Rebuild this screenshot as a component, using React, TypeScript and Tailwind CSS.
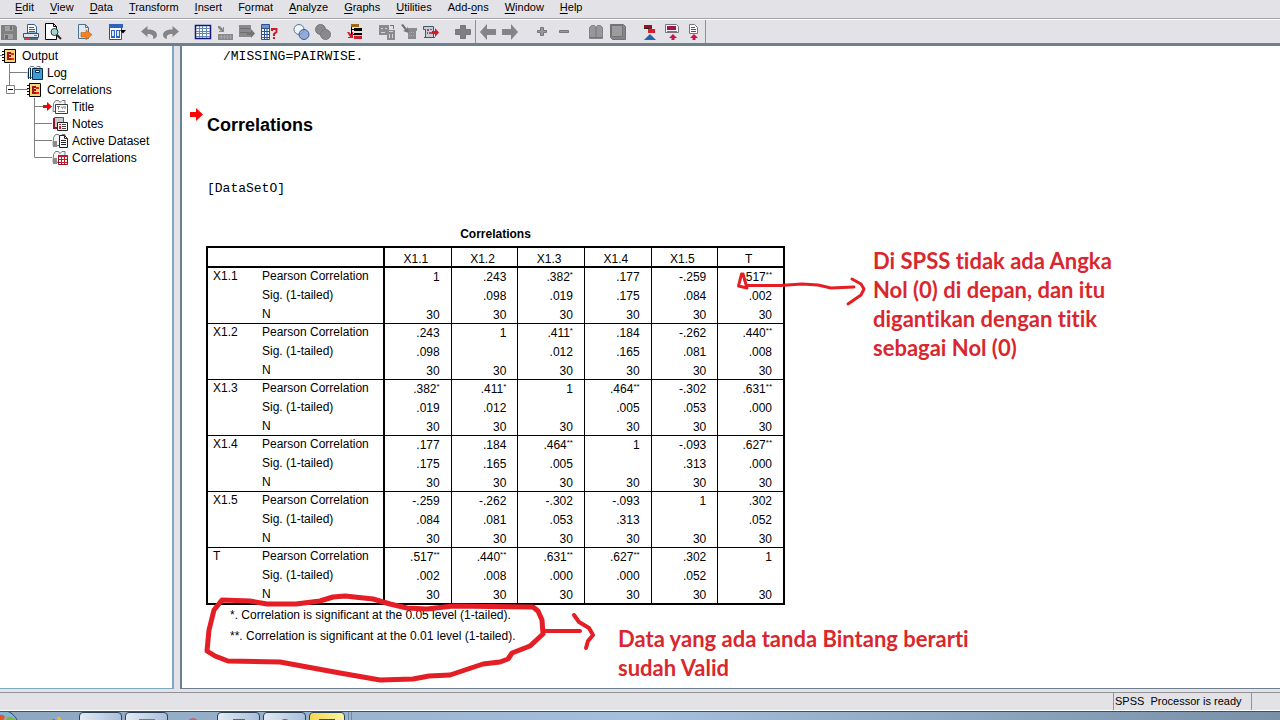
import type { ReactNode } from 'react';
import clsx from 'clsx';

const menus = [
  ['', 'E', 'dit'],
  ['', 'V', 'iew'],
  ['', 'D', 'ata'],
  ['', 'T', 'ransform'],
  ['', 'I', 'nsert'],
  ['F', 'o', 'rmat'],
  ['', 'A', 'nalyze'],
  ['', 'G', 'raphs'],
  ['', 'U', 'tilities'],
  ['Add-', 'o', 'ns'],
  ['', 'W', 'indow'],
  ['', 'H', 'elp'],
];

// Every toolbar drawing lives on an 18x18 grid.
const icons: Record<string, ReactNode> = {
  Save: (
    <>
      <path fill="#808080" d="M1 2h14l2 2v13H1z" />
      <path fill="#a2a2a4" d="M5 3h8v5H5zM4 11h9v5H4z" />
      <path fill="#6e6e70" d="M10 3h2v4h-2zM5 12h3v4H5z" />
    </>
  ),
  Print: (
    <>
      <path fill="#fff" stroke="#2b5f91" d="M5.500 1.500h7l2 2.500v6h-9z" />
      <path stroke="#2b5f91" d="M7 4.500h5M7 6.500h6M7 8.500h6" />
      <path fill="#dce5ec" stroke="#35526b" d="M1.500 10.500h15v4h-15z" />
      <path fill="#536b7c" d="M2 15h14v2H2z" />
      <path fill="#3cb44a" d="M12 12h3v1h-3z" />
      <path fill="#d44" d="M3 15h5v1H3z" />
    </>
  ),
  'Print Preview': (
    <>
      <path fill="#fff" stroke="#000" d="M1.500 .5h8l3 3v13h-11z" />
      <path fill="none" stroke="#000" d="M9.500 .5v3h3" />
      <circle cx="10.500" cy="9" r="3.500" fill="#9fd8cf" stroke="#334" />
      <path stroke="#222" strokeWidth="2" d="M13 12l4 4" />
    </>
  ),
  Export: (
    <>
      <path fill="#dfe9f2" stroke="#4d7292" d="M2.500 1.500h7l3 3v11h-10z" />
      <path fill="none" stroke="#4d7292" d="M9.500 1.500v3h3" />
      <path fill="#f58220" stroke="#c25a09" strokeWidth=".6" d="M5 9.500h5V6.800l6 5-6 5v-2.800H5z" />
    </>
  ),
  'Recall Dialog': (
    <>
      <path fill="#fff" stroke="#2c4f91" d="M1.500 4.500h12v12h-12z" />
      <path fill="#2c63bd" d="M1 1h14v4H1z" />
      <path fill="#2c63bd" d="M3 7h4v8H3zM8 7h4v8H8z" />
      <path fill="#dfe9f7" d="M4 8h2v5H4zM9 8h2v5H9z" />
      <path fill="#000" d="M12 7h6l-3 3.500z" />
    </>
  ),
  Undo: <path fill="#858587" d="M1 8.500L7.500 3v3.500c6 0 9.500 2 9.500 5.500 0 2-1.500 3.500-4 4 1-3-.5-5-5.500-5V14z" />,
  Redo: <path fill="#858587" d="M17 8.500L10.500 3v3.500C4.500 6.500 1 8.500 1 12c0 2 1.500 3.500 4 4-1-3 .5-5 5.500-5V14z" />,
  'Go to Data': (
    <>
      <path fill="#fff" stroke="#14147c" strokeWidth="1.500" d="M1.500 2.500h15v13h-15z" />
      <path fill="none" stroke="#5f88b5" d="M2 5.500h14M2 8.500h14M2 10.500h14M2 13.500h14M5.500 3v12M8.500 3v12M12.500 3v12" />
    </>
  ),
  'Go to Case': (
    <>
      <path fill="#8a8a8c" d="M2 3h2l3 3V4h1v5H3V8h2L2 5zM2 11h15v6H2z" />
      <path stroke="#a6a6a9" d="M3 14h13M5.500 12v4M8.500 12v4M11.500 12v4M14.500 12v4" />
    </>
  ),
  'Go to Variable': (
    <>
      <path fill="#8a8a8c" d="M1 2h12v12H1z" />
      <path stroke="#6e6e70" d="M2 5.500h10M2 9.500h10" />
      <path fill="#747476" d="M9 9h4V6l4 4.500-4 4.500v-3H9z" />
    </>
  ),
  Variables: (
    <>
      <path fill="#fff" stroke="#2c4f91" d="M1.500 1.500h8v15h-8z" />
      <path fill="#6d94c8" d="M2 2h7v3H2z" />
      <path fill="none" stroke="#2c4f91" d="M2 5.500h7M2 8.500h7M2 11.500h7M2 14.500h7M4.500 5v11M7 5v11" />
      <path fill="none" stroke="#d11a2b" strokeWidth="2" d="M12 8V6h4.500v3L14 11v2M14 14v2" />
    </>
  ),
  Find: (
    <>
      <circle cx="7" cy="6.500" r="5" fill="#f1f5f9" stroke="#5a7694" />
      <circle cx="12" cy="11.500" r="5" fill="#7f9fd3" fillOpacity=".8" stroke="#3b5d94" />
    </>
  ),
  'Find Next': (
    <>
      <circle cx="6.500" cy="6.500" r="5" fill="#8a8a8c" stroke="#77777a" />
      <circle cx="11.500" cy="11.500" r="5" fill="#8a8a8c" stroke="#77777a" />
    </>
  ),
  'Select Last Output': (
    <>
      <path fill="#9c6a10" d="M5 1h8v3H5z" />
      <path fill="#000" d="M8 5h8v3H8zM8 10h8v2H8zM5 4h1v8H5zM6 6h3v1H6zM6 11h3v1H6z" />
      <path fill="#d11a2b" d="M1 9h2l3 3V9h1v6H2v-1h2zM8 13h8v3H8z" />
      <path fill="#f5cf3b" d="M8 12h8v1H8z" />
    </>
  ),
  'Designate Window': (
    <>
      <path fill="#8b8b8d" d="M1 2h10v10H1zM9 7h8v10H9z" />
      <path fill="#d2d2d6" d="M3 5h2v1H3zM7 5h2v1H7zM3 9h4v1H3zM11 11h1v4h-1zM14 11h1v4h-1zM11 8h4v1h-4z" />
      <path fill="#747476" d="M12 2h4v4h-1V3h-3z" />
    </>
  ),
  'Run Script': (
    <>
      <path fill="#8b8b8d" d="M7 5h10v3h-1v8H8v-6z" />
      <path fill="#747476" d="M1 2l2-1 4 5V3l2 7-6-2 2-1z" />
      <path stroke="#a9a9ac" strokeDasharray="1 1" d="M9 9.500h6M9 12.500h6" />
    </>
  ),
  'Insert Output': (
    <>
      <path fill="#c9ced6" stroke="#46546b" d="M1.500 3.500h10v11h-8v-8h-2z" />
      <path fill="none" stroke="#46546b" d="M2 14.500h11" />
      <path fill="#b6406b" d="M5 6h2v2H5zM8 6h2v1H8zM5 9h1v2H5zM7 9h3v2H7z" />
      <path fill="#d11a2b" d="M10 8h3V5l4 4.500-4 4.500v-3h-3z" />
    </>
  ),
  Add: <path fill="#7f7f81" stroke="#77777a" d="M6.500 2.500h5v4h5v5h-5v4h-5v-4h-5v-5h5z" />,
  Previous: <path fill="#858587" d="M1 9l7-8v5h9v6H8v5z" />,
  Next: <path fill="#858587" d="M17 9l-7-8v5H1v6h9v5z" />,
  Expand: <path fill="#99999b" stroke="#77777a" d="M7.500 4.500h3v3h3v2h-3v3h-3v-3h-3v-2h3z" />,
  Collapse: <path fill="#99999b" stroke="#77777a" d="M4.500 7.500h9v2h-9z" />,
  Show: (
    <>
      <path fill="#97979a" stroke="#858588" d="M2.500 4.500l2-2h3l1.500 2 1.500-2h3l2 2v11h-13z" />
      <path stroke="#757578" d="M9 4v11M2 14.500h14" />
    </>
  ),
  Hide: (
    <>
      <path fill="#858587" stroke="#737375" d="M1.500 1.500h13l2 2v13h-13l-2-2z" />
      <path fill="#9c9c9f" stroke="#737375" d="M2.500 2.500h11v11h-11z" />
    </>
  ),
  'Promote Outline': (
    <>
      <path fill="#96121c" d="M3 2h8v4H3z" />
      <path fill="#d8202c" d="M7 6h7v4H7z" />
      <path fill="#222" d="M3 5h5v1H3z" />
      <path fill="#2464a8" d="M9 11l6 6H3z" />
    </>
  ),
  'Insert Heading': (
    <>
      <path fill="#f5f5f7" stroke="#77777a" d="M2.500 1.500h11l2 2v6h-13z" />
      <path fill="#a0144f" d="M4 3h9v4H4z" />
      <path stroke="#77777a" d="M4 8.500h10" />
      <path fill="#d1104a" d="M10 11l4 4h-2.500v2h-3v-2H6z" />
    </>
  ),
  'Insert Text': (
    <>
      <path fill="#fff" stroke="#77777a" d="M4.500 1.500h5l3 3v6h-8z" />
      <path stroke="#55555a" d="M6 4.500h4M6 6.500h5M6 8.500h5" />
      <path fill="#d1104a" d="M9 11l4 4h-2.500v2h-3v-2H5z" />
    </>
  ),
};

const toolbarLeft = [
  ['Save', 'Print', 'Print Preview'],
  ['Export'],
  ['Recall Dialog'],
  ['Undo', 'Redo'],
  ['Go to Data', 'Go to Case', 'Go to Variable', 'Variables'],
  ['Find', 'Find Next'],
  ['Select Last Output'],
  ['Designate Window', 'Run Script', 'Insert Output'],
  ['Add'],
];

const toolbarRight = [
  ['Previous', 'Next'],
  ['Expand', 'Collapse'],
  ['Show', 'Hide'],
  ['Promote Outline', 'Insert Heading', 'Insert Text'],
];

function ToolGroups({ groups }: { groups: string[][] }) {
  return (
    <div className="flex gap-[10px]">
      {groups.map((group) => (
        <div key={group[0]} className="flex">
          {group.map((name) => (
            <button key={name} type="button" aria-label={name} className="flex w-[22px] justify-center">
              <svg viewBox="0 0 18 18" className="size-[18px]">
                {icons[name]}
              </svg>
            </button>
          ))}
        </div>
      ))}
    </div>
  );
}

const book = <path fill="#f4f4f5" stroke="#77777a" d="M1.500 4.500l2-3h3l1.500 2 2-2h3v11h-12z" />;
const bookShade = <path fill="#8b8b8e" d="M1 8h4v6H1z" />;

const treeIcons: Record<string, ReactNode> = {
  output: (
    <>
      <path fill="#fbd47c" stroke="#000" d="M2.500 1.500h11v13h-11z" />
      <path stroke="#000" d="M0 3.500h3M0 6.500h3M0 9.500h3M0 12.500h3" />
      <path fill="#9b1717" d="M5 4h4v2H7v1h2v2H7v1h2v2H5z" />
      <path fill="#e22" d="M9 5h3v2H9zM9 10h3v2H9z" />
    </>
  ),
  log: (
    <>
      {book}
      <path fill="#3f9bd6" stroke="#0c2d4a" d="M5.500 3.500h10v11h-10z" />
      <path fill="#fff" stroke="#0c2d4a" d="M8.500 5.500h4v2h-4z" />
      <path stroke="#0c2d4a" d="M1.500 3v11M3.500 3v11" />
    </>
  ),
  title: (
    <>
      {book}
      <path fill="#fff" stroke="#3d3d40" d="M3.500 5.500h12v9h-12z" />
      <path fill="none" stroke="#777" d="M5 7.500h3M6.500 8v2.500M9.500 7.500l1 2 1-2M13 7v3M6 12.500h7" />
    </>
  ),
  notes: (
    <>
      <path fill="#c9c9cc" stroke="#55555a" d="M2.500 1.500h9v10h-9z" />
      <path fill="#8b1a26" d="M1 2h2v11H1zM2 11h4v2H2z" />
      <path fill="#fff" stroke="#222" d="M5.500 6.500h10v8h-10z" />
      <path fill="#d8202c" d="M7 8h2v1H7zM7 10h2v3H7z" />
      <path stroke="#444" d="M10 8.500h4M10 10.500h4M10 12.500h4" />
    </>
  ),
  dataset: (
    <>
      {book}
      {bookShade}
      <path fill="#fff" stroke="#222" d="M7.500 2.500h5l3 3v9h-8z" />
      <path fill="none" stroke="#222" d="M12.500 2.500v3h3M9 7.500h5M9 9.500h5M9 11.500h5" />
    </>
  ),
  table: (
    <>
      {book}
      {bookShade}
      <path fill="#fff" stroke="#8b101c" d="M6.500 5.500h9v9h-9z" />
      <path fill="#c9152a" d="M6 5h10v2H6z" />
      <path stroke="#c9152a" d="M7 9.500h8M7 12.500h8M9.500 6v8M12.500 6v8" />
    </>
  ),
};

const tree = [
  { label: 'Output', icon: 'output', level: 0 },
  { label: 'Log', icon: 'log', level: 1 },
  { label: 'Correlations', icon: 'output', level: 1 },
  { label: 'Title', icon: 'title', level: 2 },
  { label: 'Notes', icon: 'notes', level: 2 },
  { label: 'Active Dataset', icon: 'dataset', level: 2 },
  { label: 'Correlations', icon: 'table', level: 2 },
];

const treeIndent = ['pl-[2px]', 'pl-[27px]', 'pl-[52px]'];

function OutlineTree() {
  return (
    <aside className="w-[174px] shrink-0 overflow-hidden border-r-2 border-b border-[#7fa9c0] bg-white">
      <div className="relative pt-px">
        <ul>
          {tree.map((node, i) => (
            <li key={i} className={clsx('flex h-[17px] items-center gap-1', treeIndent[node.level])}>
              <svg viewBox="0 0 16 16" className="size-4 shrink-0">
                {treeIcons[node.icon]}
              </svg>
              <span className="text-xs whitespace-nowrap">{node.label}</span>
            </li>
          ))}
        </ul>
        <svg className="pointer-events-none absolute top-0 left-0 h-[120px] w-[52px]" fill="none" stroke="#808080">
          <path d="M0 9.500h3M9.500 18v22M9.500 26.500h18M15 43.500h13M34.500 52v59.500M34.500 60.500h10M34.500 77.500h18M34.500 94.500h18M34.500 111.500h18" />
          <path fill="#fff" d="M6.500 39.500h8v8h-8z" />
          <path stroke="#000" d="M8 43.500h5" />
          <path fill="#f00" stroke="none" d="M43 59h4v-3l5 4.500-5 4.500v-3h-4z" />
        </svg>
      </div>
    </aside>
  );
}

const variables = ['X1.1', 'X1.2', 'X1.3', 'X1.4', 'X1.5', 'T'];

const pearson = [
  ['1', '.243', '.382*', '.177', '-.259', '.517**'],
  ['.243', '1', '.411*', '.184', '-.262', '.440**'],
  ['.382*', '.411*', '1', '.464**', '-.302', '.631**'],
  ['.177', '.184', '.464**', '1', '-.093', '.627**'],
  ['-.259', '-.262', '-.302', '-.093', '1', '.302'],
  ['.517**', '.440**', '.631**', '.627**', '.302', '1'],
];

const significance = [
  ['', '.098', '.019', '.175', '.084', '.002'],
  ['.098', '', '.012', '.165', '.081', '.008'],
  ['.019', '.012', '', '.005', '.053', '.000'],
  ['.175', '.165', '.005', '', '.313', '.000'],
  ['.084', '.081', '.053', '.313', '', '.052'],
  ['.002', '.008', '.000', '.000', '.052', ''],
];

const counts = variables.map(() => '30');

function Value({ text }: { text: string }) {
  const digits = text.replace(/\*/g, '');
  const stars = text.slice(digits.length);
  return (
    <>
      {digits}
      {stars && <span className="align-top text-[8px] leading-[10px]">{stars}</span>}
    </>
  );
}

function CorrelationTable() {
  return (
    <table className="w-[579px] table-fixed border-separate border-spacing-0 border-2 border-r-0 border-b-0 border-black text-xs">
      <caption className="pb-1 leading-4 font-bold">Correlations</caption>
      <colgroup>
        <col className="w-[54px]" />
        <col className="w-[123px]" />
        {variables.map((v) => (
          <col key={v} />
        ))}
      </colgroup>
      <thead>
        <tr className="h-5">
          <td colSpan={2} className="border-r-2 border-b-2 border-black" />
          {variables.map((v) => (
            <th
              key={v}
              scope="col"
              className="border-r border-b-2 border-black p-0 pt-1 pr-1 leading-[14px] font-normal last:border-r-2"
            >
              {v}
            </th>
          ))}
        </tr>
      </thead>
      {variables.map((v, i) => (
        <tbody key={v} className="group">
          {[
            ['Pearson Correlation', pearson[i]] as const,
            ['Sig. (1-tailed)', significance[i]] as const,
            ['N', counts] as const,
          ].map(([label, values], r) => (
            <tr
              key={label}
              className={clsx(
                'align-top',
                r === 2 ? 'h-[18px] *:border-b group-last:h-[19px] group-last:*:border-b-2' : 'h-[19px]',
              )}
            >
              {r === 0 && (
                <th rowSpan={3} scope="rowgroup" className="border-b border-black p-0 pl-[5px] text-left leading-4 font-normal group-last:border-b-2">
                  {v}
                </th>
              )}
              <th scope="row" className="border-r-2 border-black p-0 text-left leading-4 font-normal whitespace-nowrap">
                {label}
              </th>
              {values.map((value, c) => (
                <td
                  key={c}
                  className="border-r border-black p-0 pt-[2px] pr-[11px] text-right leading-[15px] last:border-r-2"
                >
                  <Value text={value} />
                </td>
              ))}
            </tr>
          ))}
        </tbody>
      ))}
    </table>
  );
}

function Ink() {
  return (
    <svg
      viewBox="182 46 1098 642"
      className="pointer-events-none absolute top-0 left-0 h-[642px] w-[1098px]"
      fill="none"
      stroke="#e51d25"
      strokeLinecap="round"
      strokeLinejoin="round"
    >
      <g strokeWidth="3">
        <path d="M741.500 274L738.500 286L747 288L743 274" />
        <path d="M747 285.500L780 285.500L802 284L818 285L831 288L854 287" />
        <path d="M852 279L861 284L864 289L861 295L848 304" />
      </g>
      <path
        strokeWidth="5"
        d="M222 600L214 610L209 630L207 651L215 656L228 661L280 662L340 673L380 680L413 679L429 676L450 675L483 664L500 662L508 659L512 653L530 646L543 634L542 620L538 611L533 607L453 606L427 609L407 608L390 604L373 599L345 596L333 597L320 601L296 604L267 604L250 601Z"
      />
      <path strokeWidth="4" d="M545 631L580 631M574 615L579 622L589 628L593 635L588 641L586 648" />
    </svg>
  );
}

const noteStyle =
  "absolute font-[Lato,sans-serif] text-[22px] leading-[29px] font-bold whitespace-nowrap text-[#d9272e] [font-variant-ligatures:none]";

function OutputDocument() {
  return (
    <main className="relative min-w-0 flex-1 overflow-hidden border-b border-l-2 border-[#6e7f90] bg-white pl-6">
      <pre className="mt-[3px] ml-[17px] font-['Liberation_Mono'] text-[13px] leading-4">/MISSING=PAIRWISE.</pre>
      <svg viewBox="0 0 13 13" className="absolute top-[62px] left-2 size-[13px]" fill="#f00">
        <path d="M0 4h6V0l7 6.500L6 13V9H0z" />
      </svg>
      <h1 className="mt-[46px] ml-px text-lg leading-7 font-bold">Correlations</h1>
      <p className="mt-[42px] mb-[29px] ml-px font-['Liberation_Mono'] text-[13px] leading-4">[DataSetO]</p>
      <CorrelationTable />
      <div className="ml-6 text-xs leading-[21px]">
        <p>*. Correlation is significant at the 0.05 level (1-tailed).</p>
        <p>**. Correlation is significant at the 0.01 level (1-tailed).</p>
      </div>

      <Ink />
      <p className={clsx(noteStyle, 'top-[200px] left-[691px]')}>
        Di SPSS tidak ada Angka
        <br />
        Nol (0) di depan, dan itu
        <br />
        digantikan dengan titik
        <br />
        sebagai Nol (0)
      </p>
      <p className={clsx(noteStyle, 'top-[578px] left-[436px]')}>
        Data yang ada tanda Bintang berarti
        <br />
        sudah Valid
      </p>
    </main>
  );
}

function TaskButton({ label, active, children }: { label: string; active?: boolean; children?: ReactNode }) {
  return (
    <button
      type="button"
      aria-label={label}
      className={clsx(
        'flex h-4 justify-center rounded-t-sm border border-[#2e4358] pt-[6px]',
        active
          ? 'w-9 bg-linear-to-r from-[#f3d64e] to-[#fdf3a0]'
          : 'w-[43px] bg-linear-to-r from-[#e3eaf3] to-[#a9bfda]',
      )}
    >
      {children}
    </button>
  );
}

function Taskbar() {
  return (
    <footer className="flex h-[9px] shrink-0 overflow-hidden border-t border-[#3d4f60] bg-linear-to-r from-[#8da6c0] via-[#a5c0dd] to-[#7890a8]">
      <button type="button" aria-label="Start" className="w-[79px] shrink-0">
        <svg viewBox="0 0 79 9" className="h-[9px] w-[79px]">
          <circle cx="1" cy="16" r="18" fill="#86b2d3" stroke="#24527d" />
          <path fill="#e4572e" d="M0 3q3-1 5 2l-2 4H0z" />
          <path fill="#7db83a" d="M7 5q4-1 8 2v2H5z" />
          <path fill="#e9b93a" d="M57 5l3 0 2 4h-4z" />
          <path fill="#3c77c0" d="M51 8l4-1v2h-4z" />
        </svg>
      </button>
      <div className="flex gap-[3px]">
        <TaskButton label="Window 1" />
        <TaskButton label="Window 2">
          <span className="h-3 w-4 border border-[#3b8cc4] bg-[#b9e1f5]" />
        </TaskButton>
        <span className="flex w-[43px] justify-center pt-[6px]">
          <span className="size-3 rounded-full bg-[#c0696c]" />
        </span>
        <TaskButton label="Window 3">
          <span className="h-3 w-3 border border-[#2b8a3e] bg-white" />
        </TaskButton>
        <TaskButton label="Window 4">
          <span className="size-3 rounded-full border-2 border-[#60666e]" />
        </TaskButton>
        <TaskButton label="Window 5" active>
          <span className="h-3 w-4 bg-[#c4161c]" />
        </TaskButton>
        <span className="w-1 border-x border-[#7189a5]" />
      </div>
    </footer>
  );
}

export default function App() {
  return (
    <div className="flex h-screen min-h-[720px] flex-col overflow-hidden bg-[#e2e2e7] font-['Liberation_Sans',Arial,sans-serif] text-black">
      <nav className="flex h-[19px] shrink-0 gap-4 border-b border-[#a3a3a8] pl-[15px] text-[11px] leading-[14px]">
        {menus.map(([before, key, after]) => (
          <button key={before + key + after} type="button" className="self-start whitespace-nowrap">
            {before}
            <span className="underline underline-offset-2">{key}</span>
            {after}
          </button>
        ))}
      </nav>
      <div className="flex h-[27px] shrink-0 border-t border-b-3 border-t-white border-b-[#6e7f90]">
        <div className="-ml-0.5 flex items-center gap-px border-r border-[#8592a0]">
          <ToolGroups groups={toolbarLeft} />
          <span className="h-full w-px bg-[#8592a0]" />
          <ToolGroups groups={toolbarRight} />
        </div>
      </div>

      <div className="flex min-h-0 flex-1">
        <OutlineTree />
        <div className="w-1.5 shrink-0 bg-[#e2e2e7]" />
        <OutputDocument />
      </div>

      <div className="mt-[3px] flex h-[19px] shrink-0 border-t border-b border-t-[#929297] border-b-white text-[11px] leading-[17px]">
        <div className="flex-1" />
        <div className="w-[139px] border-x border-[#929297] pl-px whitespace-pre">SPSS  Processor is ready</div>
        <div className="w-7" />
      </div>
      <Taskbar />
    </div>
  );
}
